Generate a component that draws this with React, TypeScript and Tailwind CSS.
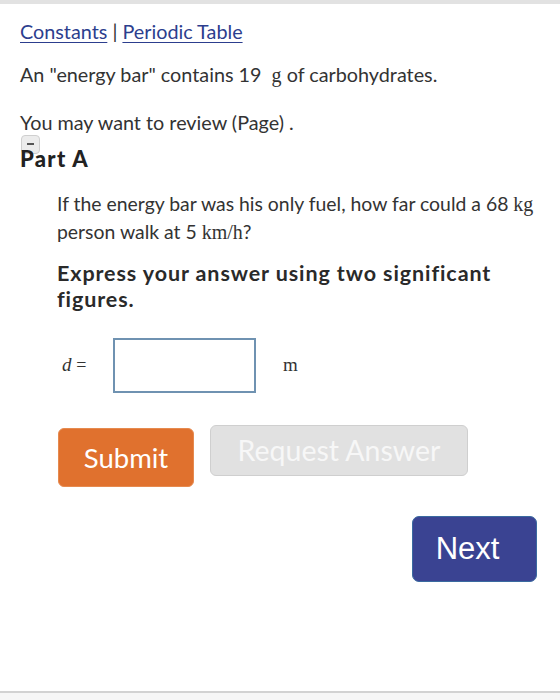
import React from "react";

const sans = { fontFamily: "Lato, 'Open Sans', sans-serif" };

export default function App() {
  return (
    <div className="w-[560px] h-[700px] bg-white flex flex-col text-[#333]" style={sans}>
      <div className="h-[4px] bg-[#e2e2e2]" />
      <div className="flex-1 flex flex-col pl-[20px] pr-[23px] pt-[15px]">
        <div className="text-[19.8px] leading-[24px] whitespace-nowrap">
          <a className="text-[#2c3e8e] underline decoration-1 underline-offset-[3px]" href="#">Constants</a>
          <span className="text-[#333]"> | </span>
          <a className="text-[#2c3e8e] underline decoration-1 underline-offset-[3px]" href="#">Periodic Table</a>
        </div>
        <p className="mt-[19px] text-[19.8px] leading-[24px] whitespace-nowrap">
          An "energy bar" contains 19{" "}
          <span className="font-['Liberation_Serif',serif] text-[20px]">&nbsp;g</span> of carbohydrates.
        </p>
        <p className="mt-[23px] text-[19.8px] leading-[24px] whitespace-nowrap">You may want to review (Page) .</p>
        <div className="mt-[1px] ml-[1px] w-[19px] h-[19px] rounded-[4px] border border-[#cfcfcf] bg-[#ececec] flex justify-center">
          <div className="mt-[7px] w-[7px] h-[2px] bg-[#555]" />
        </div>
        <h2 className="mt-[-7px] text-[22px] leading-[24px] font-black tracking-[1.3px] text-[#222]">Part A</h2>
        <div className="pl-[37px]">
          <p className="mt-[19px] text-[19.4px] leading-[27px] whitespace-nowrap">
            If the energy bar was his only fuel, how far could a 68{" "}
            <span className="font-['Liberation_Serif',serif] text-[20px]">kg</span>
            <br />
            person walk at 5 <span className="font-['Liberation_Serif',serif] text-[20px]">km/h</span>?
          </p>
          <p className="mt-[14px] text-[21.5px] leading-[26px] font-bold tracking-[0.9px] text-[#2a2a2a] whitespace-nowrap">
            Express your answer using two significant
            <br />
            figures.
          </p>
          <div className="mt-[26px] flex items-center">
            <span className="ml-[5px] w-[51px] font-['Liberation_Serif',serif] text-[19px]">
              <i>d</i> <span className="text-[18px]">=</span>
            </span>
            <div className="w-[143px] h-[55px] border-2 border-[#6f92b1] bg-white" />
            <span className="ml-[27px] font-['Liberation_Serif',serif] text-[19px]">m</span>
          </div>
          <div className="mt-[32px] flex items-start gap-[16px]">
            <button className="mt-[3px] ml-[1px] w-[136px] h-[59px] rounded-[6px] bg-[#e0712e] border border-[#e68a4f] text-white text-[27.5px]" style={sans}>
              Submit
            </button>
            <button className="w-[258px] h-[51px] rounded-[6px] bg-[#e1e1e1] border border-[#cfcfcf] text-[#f7f7f7] text-[28.5px]" style={sans}>
              Request Answer
            </button>
          </div>
        </div>
        <div className="mt-[29px] flex justify-end">
          <button className="w-[125px] h-[66px] pr-[14px] rounded-[7px] bg-[#3a4392] border border-[#3a6aa0] text-white text-[31px] font-['Liberation_Sans',Arial,sans-serif]">
            Next
          </button>
        </div>
      </div>
      <div className="h-[9px] border-t-2 border-[#d2d2d2] bg-[#f6f6f6]" />
    </div>
  );
}
